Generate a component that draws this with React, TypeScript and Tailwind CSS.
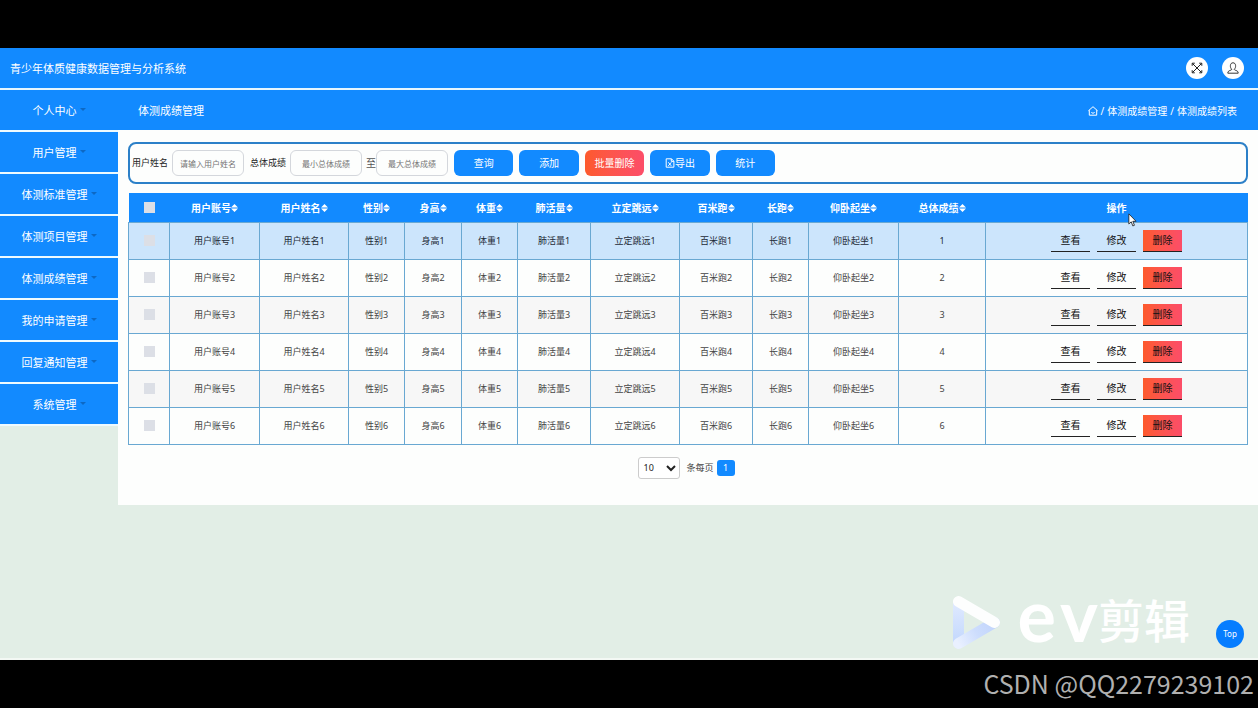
import React from "react";

const menu = [
  "个人中心",
  "用户管理",
  "体测标准管理",
  "体测项目管理",
  "体测成绩管理",
  "我的申请管理",
  "回复通知管理",
  "系统管理",
];

const columns = [
  { name: "用户账号", width: "w-[90px]" },
  { name: "用户姓名", width: "w-[89px]" },
  { name: "性别", width: "w-[56px]" },
  { name: "身高", width: "w-[57px]" },
  { name: "体重", width: "w-[56px]" },
  { name: "肺活量", width: "w-[73px]" },
  { name: "立定跳远", width: "w-[89px]" },
  { name: "百米跑", width: "w-[73px]" },
  { name: "长跑", width: "w-[56px]" },
  { name: "仰卧起坐", width: "w-[90px]" },
  { name: "总体成绩", width: "w-[87px]" },
];

const rows = [1, 2, 3, 4, 5, 6];

function rowColor(n: number) {
  if (n === 1) return "bg-[#cce5fc] text-[#1d2a36]";
  return n % 2 === 1 ? "bg-[#f7f7f7] text-[#444]" : "bg-[#fdfefd] text-[#444]";
}

function SortIcon() {
  return (
    <svg viewBox="0 0 7 8" className="h-2 w-[7px]" fill="currentColor" aria-hidden="true">
      <path d="M3.5 0 7 3.5H0zM3.5 8 0 4.5h7z" />
    </svg>
  );
}

function ExpandIcon() {
  return (
    <svg viewBox="0 0 12 12" className="h-3 w-3" fill="none" stroke="#222" strokeWidth="1" aria-hidden="true">
      <path d="M1.5 1.5l9 9M10.5 1.5l-9 9M1.2 3.8V1.2h2.6M8.2 1.2h2.6v2.6M10.8 8.2v2.6H8.2M3.8 10.8H1.2V8.2" />
    </svg>
  );
}

function UserIcon() {
  return (
    <svg viewBox="0 0 12 12" className="h-3 w-3" fill="none" stroke="#222" strokeWidth="0.9" aria-hidden="true">
      <path d="M4.7 7.2C3.7 6.3 3.3 5 3.4 3.6 3.5 1.8 4.5.8 6 .8s2.500 1 2.600 2.800C8.700 5 8.300 6.300 7.300 7.200c0 .7.5.9 1.500 1.200 1.500.5 2.300 1 2.400 2.800H.8c.1-1.800.9-2.300 2.400-2.800 1-.3 1.500-.5 1.500-1.200z" />
    </svg>
  );
}

function HomeIcon() {
  return (
    <svg viewBox="0 0 10 10" className="h-[10px] w-[10px]" fill="none" stroke="currentColor" strokeWidth="1" strokeLinejoin="round" aria-hidden="true">
      <path d="M.4 4.800 5 .7l4.600 4.100M1.300 4.200v5h7.400v-5M3.300 6.200c.7 1.300 2.700 1.300 3.400 0" />
    </svg>
  );
}

function ExportIcon() {
  return (
    <svg viewBox="0 0 10 10" className="h-[10px] w-[10px]" fill="none" stroke="currentColor" strokeWidth="1" aria-hidden="true">
      <path d="M1.200.8h5.300l2.400 2.400v6H1.200zM6.300.8v2.600h2.600M3.300 4.300l3 3.600M6.300 4.300l-3 3.600" />
    </svg>
  );
}

const checkbox = "block mx-auto h-[11px] w-[11px] appearance-none bg-[#dcdfe6]";
const field =
  "h-[26px] w-[72px] rounded-md border border-[#d4d7dc] bg-transparent text-center text-[8px] text-gray-700 placeholder:text-[#757575] outline-none";
const toolButton = "flex h-[26px] items-center justify-center rounded-md text-[10px] text-white";
const rowButton = "h-[22px] w-[39px] border-b border-[#222] text-[10px] leading-5 text-[#111]";
const danger = "bg-linear-to-r from-[#fd5a2b] to-[#fc4d68]";

export default function App() {
  return (
    <div className="flex min-h-screen flex-col bg-black pt-12 font-['Noto_Sans','Noto_Sans_CJK_SC',sans-serif] text-[9px]">
      <div className="relative flex flex-1 flex-col border-b-2 border-[#f3f8f4] bg-[#e2eee6]">
        <header className="flex h-[42px] items-center justify-between border-b-2 border-[#e6f6ff] bg-[#128aff] pr-[14px] pl-[10px]">
          <h1 className="pt-[2px] text-[11px] text-white">青少年体质健康数据管理与分析系统</h1>
          <div className="flex gap-[14px]">
            <button aria-label="全屏" className="flex h-[22px] w-[22px] items-center justify-center rounded-full bg-white">
              <ExpandIcon />
            </button>
            <button aria-label="用户" className="flex h-[22px] w-[22px] items-center justify-center rounded-full bg-white">
              <UserIcon />
            </button>
          </div>
        </header>

        <div className="flex items-start">
          <nav className="w-[118px] shrink-0">
            {menu.map((item) => (
              <button
                key={item}
                className="flex h-[42px] w-full items-center justify-center gap-[3px] border-b-2 border-[#eefaff] bg-[#128aff] pt-[2px] text-[11px] text-white"
              >
                {item}
                <svg viewBox="0 0 6 3" className="mb-1 h-[3px] w-[6px]" fill="#0d68c4" aria-hidden="true">
                  <path d="M0 0h6L3 3z" />
                </svg>
              </button>
            ))}
          </nav>

          <main className="min-w-0 flex-1 bg-[#fdfefd] pb-[26px]">
            <div className="flex h-10 items-center justify-between bg-[#128aff] pt-[2px] pr-[21px] pl-5 text-white">
              <h2 className="text-[11px]">体测成绩管理</h2>
              <div className="flex items-center gap-[3px] text-[10px]">
                <HomeIcon />
                <span>/</span>
                <a href="#scores">体测成绩管理</a>
                <span>/</span>
                <span>体测成绩列表</span>
              </div>
            </div>

            <div className="px-[10px] pt-3">
              <form
                className="flex h-[42px] items-center rounded-lg border-2 border-[#2c80c8] pl-[2px] text-[#222]"
                onSubmit={(e) => e.preventDefault()}
              >
                <label className="flex items-center gap-1">
                  用户姓名
                  <input className={field} placeholder="请输入用户姓名" />
                </label>
                <label className="ml-[6px] flex items-center gap-1">
                  总体成绩
                  <input className={field} placeholder="最小总体成绩" />
                </label>
                <label className="ml-1 flex items-center">
                  <span className="text-[10px] text-[#555]">至</span>
                  <input className={field} placeholder="最大总体成绩" />
                </label>
                <div className="ml-[6px] grid w-[321px] grid-cols-5 gap-[6px]">
                  <button className={`${toolButton} bg-[#128aff]`}>查询</button>
                  <button className={`${toolButton} bg-[#128aff]`}>添加</button>
                  <button className={`${toolButton} ${danger}`}>批量删除</button>
                  <button className={`${toolButton} bg-[#128aff]`}>
                    <ExportIcon />
                    导出
                  </button>
                  <button className={`${toolButton} bg-[#128aff]`}>统计</button>
                </div>
              </form>

              <table className="mt-[9px] w-full table-fixed border-collapse text-center">
                <thead>
                  <tr className="h-[29px] bg-[#128aff] text-[10px] text-white">
                    <th className="w-[41px]">
                      <input type="checkbox" aria-label="全选" className={checkbox} />
                    </th>
                    {columns.map((c) => (
                      <th key={c.name} className={`${c.width} pt-[2px] font-bold`}>
                        <span className="flex items-center justify-center">
                          {c.name}
                          <SortIcon />
                        </span>
                      </th>
                    ))}
                    <th className="pt-[2px] font-bold">
                      <span className="relative">
                        操作
                        <svg viewBox="0 0 8 13" className="absolute top-3 left-[21px] h-[14px] w-[9px]" aria-hidden="true">
                          <path d="M.6.8v9.400l2.200-2 1.500 3.800 1.500-.6-1.500-3.700h3z" fill="#fff" stroke="#222" strokeWidth="0.8" />
                        </svg>
                      </span>
                    </th>
                  </tr>
                </thead>
                <tbody>
                  {rows.map((n) => (
                    <tr key={n} className={`h-[37px] ${rowColor(n)}`}>
                      <td className="border border-[#69a8d2]">
                        <input type="checkbox" aria-label={`选择${n}`} className={checkbox} />
                      </td>
                      {columns.map((c) => (
                        <td key={c.name} className="border border-[#69a8d2]">
                          {c.name === "总体成绩" ? n : `${c.name}${n}`}
                        </td>
                      ))}
                      <td className="border border-[#69a8d2]">
                        <div className="flex justify-center gap-[7px]">
                          <button className={rowButton}>查看</button>
                          <button className={rowButton}>修改</button>
                          <button className={`${rowButton} ${danger}`}>删除</button>
                        </div>
                      </td>
                    </tr>
                  ))}
                </tbody>
              </table>

              <div className="mt-3 flex items-center justify-center pr-[3px] text-[#444]">
                <label className="flex items-center gap-[6px]">
                  <select className="h-[22px] w-[42px] rounded-[3px] border border-[#ccc] bg-white text-[9px] text-[#222]">
                    <option>10</option>
                    <option>20</option>
                  </select>
                  条每页
                </label>
                <button className="ml-[3px] h-4 w-[18px] rounded-[3px] bg-[#128aff] text-[9px] text-white">1</button>
              </div>
            </div>
          </main>
        </div>

        <div className="pointer-events-none absolute right-[68px] bottom-2 flex items-center text-white">
          <svg viewBox="0 0 50 56" className="mr-4 h-14 w-[50px]" fill="none" strokeWidth="11" aria-hidden="true">
            <defs>
              <linearGradient id="side" x1="0" y1="0" x2="0" y2="1">
                <stop offset="0" stopColor="#e0eaff" />
                <stop offset="1" stopColor="#c3d8fd" />
              </linearGradient>
              <linearGradient id="base" gradientUnits="userSpaceOnUse" x1="6" y1="49" x2="43" y2="28">
                <stop offset="0" stopColor="#e9f0ff" />
                <stop offset="0.5" stopColor="#cdddfd" />
                <stop offset="1" stopColor="#c0d4fb" />
              </linearGradient>
            </defs>
            <path d="M1 8h11v41H1z" fill="url(#side)" />
            <path d="M6.500 49.500 42.500 28.500" stroke="url(#base)" strokeLinecap="round" />
            <path d="M6.500 7.500 42.500 28.500" stroke="#fdfefe" strokeLinecap="round" />
          </svg>
          <span className="flex h-14 items-center">
            <span className="flex gap-1 pb-4 font-['Lato',sans-serif] text-[72px] leading-[56px] font-bold">
              <span>e</span>
              <span>v</span>
            </span>
            <span className="pb-1 text-[46px] leading-[46px] font-medium">剪辑</span>
          </span>
        </div>
        <button className="absolute right-[14px] bottom-[10px] h-7 w-7 rounded-full bg-[#067dff] text-[8px] text-white">Top</button>
      </div>

      <footer className="flex h-12 items-center justify-end pr-1 font-['Noto_Sans_CJK_SC',sans-serif] text-[25px] text-[#b0b0b0]">
        <span>CSDN @QQ2279239102</span>
      </footer>
    </div>
  );
}
